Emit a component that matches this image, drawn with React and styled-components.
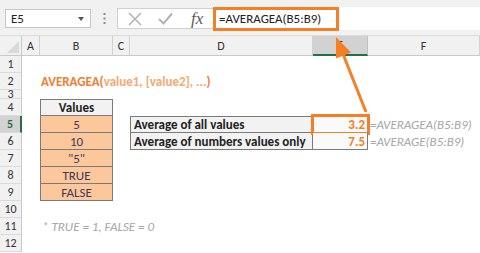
import React from "react";
import styled, { createGlobalStyle } from "styled-components";

const FONT = `"Carlito", "Liberation Sans Narrow", "Liberation Sans", sans-serif`;
const ORANGE = "#f47f24";
const GRID_DARK = "#7a7a7a";

const Global = createGlobalStyle`
  html, body { margin: 0; padding: 0; background: #fff; }
  body { font-family: ${FONT}; width: 480px; height: 253px; overflow: hidden; }
  * { box-sizing: border-box; }
`;

const Page = styled.div`
  position: relative;
  width: 480px;
  height: 253px;
  overflow: hidden;
`;

const Toolbar = styled.div`
  height: 36px;
  background: #f1f1f1;
  display: flex;
  align-items: center;
  padding: 2px 0 0 5px;
  border-bottom: 1px solid #dcdcdc;
`;

const NameBox = styled.div`
  width: 86px;
  height: 19px;
  background: #fff;
  border: 1px solid #c6c6c6;
  display: flex;
  align-items: center;
  justify-content: space-between;
  padding: 0 6px 0 5px;
  font-size: 13px;
  color: #222;
`;

const Caret = styled.span`
  width: 0;
  height: 0;
  border-left: 3.5px solid transparent;
  border-right: 3.5px solid transparent;
  border-top: 4px solid #555;
`;

const Grip = styled.div`
  width: 26px;
  display: flex;
  justify-content: center;
`;

const FxBox = styled.div`
  width: 96px;
  height: 21px;
  background: #fff;
  border: 1px solid #d0d0d0;
  border-right: none;
  display: flex;
  align-items: center;
  padding-left: 10px;
  gap: 16px;
`;

const Fx = styled.span`
  font-family: "Liberation Serif", serif;
  font-style: italic;
  font-size: 17px;
  color: #5a5a5a;
  margin-left: 2px;
  line-height: 1;
`;

const FormulaBar = styled.div`
  flex: 1;
  height: 23px;
  background: #fff;
  display: flex;
  align-items: center;
`;

const FormulaHighlight = styled.div`
  width: 126px;
  height: 24px;
  border: 3px solid ${ORANGE};
  display: flex;
  align-items: center;
  padding-left: 3px;
  font-size: 13px;
  color: #222;
  white-space: nowrap;
`;

const Sheet = styled.div`
  display: grid;
  grid-template-columns: 22px 18px 73px 17px 183px 55px 1fr;
  grid-template-rows: 20px 17px 17px 9px repeat(9, 17px);
`;

const Corner = styled.div`
  position: relative;
  background: #f1f1f1;
  border-right: 1px solid #c9c9c9;
  border-bottom: 1px solid #c9c9c9;
  &::after {
    content: "";
    position: absolute;
    right: 2px;
    bottom: 2px;
    border-left: 12px solid transparent;
    border-bottom: 12px solid #dadada;
  }
`;

const ColHead = styled.div`
  background: ${(p) => (p.$sel ? "#d2d2d2" : "#f1f1f1")};
  border-right: 1px solid ${(p) => (p.$sel ? "#c0c0c0" : "#d2d2d2")};
  border-bottom: ${(p) => (p.$sel ? "2px solid #217346" : "1px solid #c9c9c9")};
  display: flex;
  align-items: center;
  justify-content: center;
  font-size: 12px;
  color: #333;
`;

const RowHead = styled.div`
  background: ${(p) => (p.$sel ? "#d2d2d2" : "#f1f1f1")};
  border-right: ${(p) => (p.$sel ? "2px solid #217346" : "1px solid #c9c9c9")};
  border-bottom: 1px solid #dadada;
  display: flex;
  align-items: center;
  justify-content: center;
  font-size: 12px;
  overflow: hidden;
  color: ${(p) => (p.$sel ? "#217346" : "#333")};
  font-weight: ${(p) => (p.$sel ? 700 : 400)};
`;

const Blank = styled.div`
  grid-column: span ${(p) => p.$span || 1};
`;

const Title = styled.div`
  grid-column: span 5;
  display: flex;
  align-items: center;
  padding-left: 1px;
  font-size: 13px;
  font-weight: 700;
  color: #f6a871;
  white-space: nowrap;
`;

const Strong = styled.span`
  color: #f27e2f;
`;

const Cell = styled.div`
  display: flex;
  align-items: center;
  justify-content: ${(p) => p.$align || "flex-start"};
  padding: 0 3px;
  font-size: 13px;
  white-space: nowrap;
  background: ${(p) => p.$bg || "transparent"};
  color: ${(p) => p.$color || "#222"};
  font-weight: ${(p) => (p.$bold ? 700 : 400)};
  border-right: 1px solid ${GRID_DARK};
  border-bottom: 1px solid ${GRID_DARK};
  border-top: ${(p) => (p.$top ? `1px solid ${GRID_DARK}` : "none")};
  border-left: ${(p) => (p.$left ? `1px solid ${GRID_DARK}` : "none")};
`;

const ResultCell = styled(Cell)`
  position: relative;
  z-index: 2;
  color: ${ORANGE};
  font-weight: 700;
  justify-content: flex-end;
  padding-right: 2px;
  outline: ${(p) => (p.$hi ? `3px solid ${ORANGE}` : "none")};
  outline-offset: -1px;
`;

const Note = styled.div`
  display: flex;
  align-items: center;
  padding-left: 2px;
  font-size: 13px;
  font-style: italic;
  color: #a6a6a6;
  white-space: nowrap;
  grid-column: span ${(p) => p.$span || 1};
`;

const Arrow = styled.svg`
  position: absolute;
  left: 0;
  top: 0;
  pointer-events: none;
`;

const VALUE_BG = "#fcc79b";
const VALUE_TEXT = "#3e3a5c";

function ValueCell({ children }) {
  return (
    <Cell $bg={VALUE_BG} $color={VALUE_TEXT} $align="center" $left>
      {children}
    </Cell>
  );
}

export default function App() {
  const cols = ["A", "B", "C", "D", "E", "F"];
  return (
    <Page>
      <Global />
      <Toolbar>
        <NameBox>
          E5
          <Caret />
        </NameBox>
        <Grip>
          <svg width="3" height="11" viewBox="0 0 3 11">
            <rect x="0.5" y="0" width="2" height="2" fill="#8a8a8a" />
            <rect x="0.5" y="4.5" width="2" height="2" fill="#8a8a8a" />
            <rect x="0.5" y="9" width="2" height="2" fill="#8a8a8a" />
          </svg>
        </Grip>
        <FxBox>
          <svg width="14" height="14" viewBox="0 0 14 14">
            <path d="M1 1 L13 13 M13 1 L1 13" stroke="#b3b3b3" strokeWidth="1.6" fill="none" />
          </svg>
          <svg width="15" height="13" viewBox="0 0 15 13">
            <path d="M1 7 L5.5 11.5 L14 1.5" stroke="#b3b3b3" strokeWidth="2" fill="none" />
          </svg>
          <Fx>fx</Fx>
        </FxBox>
        <FormulaBar>
          <FormulaHighlight>=AVERAGEA(B5:B9)</FormulaHighlight>
        </FormulaBar>
      </Toolbar>

      <Sheet>
        <Corner />
        {cols.map((c) => (
          <ColHead key={c} $sel={c === "E"}>
            {c}
          </ColHead>
        ))}

        <RowHead>1</RowHead>
        <Blank $span={6} />

        <RowHead>2</RowHead>
        <Blank />
        <Title>
          <Strong>AVERAGEA(</Strong>value1, [value2], ...<Strong>)</Strong>
        </Title>

        <RowHead>3</RowHead>
        <Blank $span={6} />

        <RowHead>4</RowHead>
        <Blank />
        <Cell $bg="#f2f2f2" $bold $align="center" $top $left>
          Values
        </Cell>
        <Blank $span={4} />

        <RowHead $sel>5</RowHead>
        <Blank />
        <ValueCell>5</ValueCell>
        <Blank />
        <Cell $bg="#f2f2f2" $bold $top $left>
          Average of all values
        </Cell>
        <ResultCell $bg="#fafafa" $top $hi>
          3.2
        </ResultCell>
        <Note>=AVERAGEA(B5:B9)</Note>

        <RowHead>6</RowHead>
        <Blank />
        <ValueCell>10</ValueCell>
        <Blank />
        <Cell $bg="#f2f2f2" $bold $left>
          Average of numbers values only
        </Cell>
        <ResultCell $bg="#fafafa">7.5</ResultCell>
        <Note>=AVERAGE(B5:B9)</Note>

        <RowHead>7</RowHead>
        <Blank />
        <ValueCell>"5"</ValueCell>
        <Blank $span={4} />

        <RowHead>8</RowHead>
        <Blank />
        <ValueCell>TRUE</ValueCell>
        <Blank $span={4} />

        <RowHead>9</RowHead>
        <Blank />
        <ValueCell>FALSE</ValueCell>
        <Blank $span={4} />

        <RowHead>10</RowHead>
        <Blank $span={6} />

        <RowHead>11</RowHead>
        <Blank />
        <Note $span={5}>* TRUE = 1, FALSE = 0</Note>

        <RowHead>12</RowHead>
        <Blank $span={6} />
      </Sheet>

      <Arrow width="480" height="253" viewBox="0 0 480 253">
        <line x1="366" y1="112" x2="343" y2="54" stroke={ORANGE} strokeWidth="3" />
        <polygon points="336,37 351,52.6 336,58.6" fill={ORANGE} />
      </Arrow>
    </Page>
  );
}
